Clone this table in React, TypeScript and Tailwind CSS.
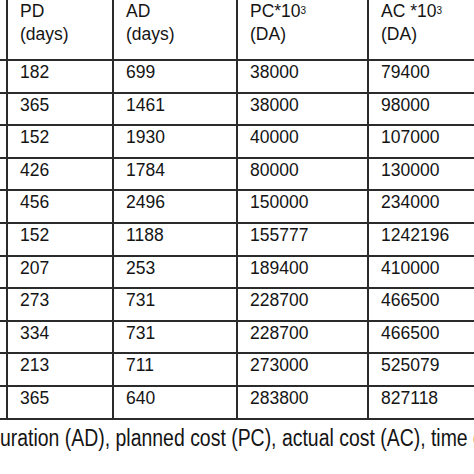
import React from "react"

const rows = [
  ["182", "699", "38000", "79400"],
  ["365", "1461", "38000", "98000"],
  ["152", "1930", "40000", "107000"],
  ["426", "1784", "80000", "130000"],
  ["456", "2496", "150000", "234000"],
  ["152", "1188", "155777", "1242196"],
  ["207", "253", "189400", "410000"],
  ["273", "731", "228700", "466500"],
  ["334", "731", "228700", "466500"],
  ["213", "711", "273000", "525079"],
  ["365", "640", "283800", "827118"],
]

function Sup({ children }: { children: React.ReactNode }) {
  return <sup className="text-[10px] top-[-3px]">{children}</sup>
}

export default function App() {
  const headCell = "h-[61px] border-b-2 border-l-2 border-[#2b2b2b] pl-3"
  const cell = "h-[32.6px] border-b-2 border-l-2 border-[#2b2b2b] pl-3"

  return (
    <div className="w-[474px] h-[474px] overflow-hidden bg-white text-[#141414] font-['Liberation_Sans',Arial,sans-serif]">
      <div className="grid grid-cols-[6px_106px_124px_131px_1fr] text-[17.5px] leading-[23px]">
        <div className="h-[61px] border-b-2 border-[#2b2b2b]" />
        <div className={headCell}>
          PD
          <br />
          (days)
        </div>
        <div className={headCell}>
          AD
          <br />
          (days)
        </div>
        <div className={headCell}>
          PC*10<Sup>3</Sup>
          <br />
          (DA)
        </div>
        <div className={headCell}>
          AC *10<Sup>3</Sup>
          <br />
          (DA)
        </div>

        {rows.map((r, i) => (
          <React.Fragment key={i}>
            <div className="h-[32.6px] border-b-2 border-[#2b2b2b]" />
            {r.map((v, j) => (
              <div key={j} className={cell}>
                {v}
              </div>
            ))}
          </React.Fragment>
        ))}
      </div>

      <div className="mt-[3px] whitespace-nowrap text-[23px] leading-[30px] origin-left scale-x-[0.845]">
        uration (AD), planned cost (PC), actual cost (AC), time d
      </div>
    </div>
  )
}
